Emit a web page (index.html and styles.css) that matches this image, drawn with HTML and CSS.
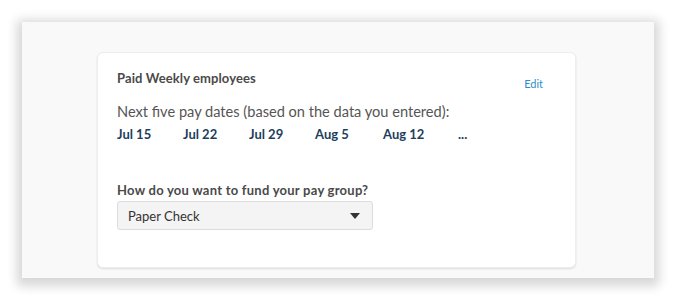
FILE: index.html
```html
<!DOCTYPE html>
<html>
<head>
<meta charset="utf-8">
<link rel="stylesheet" href="styles.css">
</head>
<body>
<div class="frame">
  <div class="card">
    <div class="head">
      <div class="title">Paid Weekly employees</div>
      <a class="edit">Edit</a>
    </div>
    <div class="next">Next five pay dates (based on the data you entered):</div>
    <div class="dates">
      <span>Jul 15</span>
      <span>Jul 22</span>
      <span>Jul 29</span>
      <span>Aug 5</span>
      <span>Aug 12</span>
      <span>...</span>
    </div>
    <div class="label">How do you want to fund your pay group?</div>
    <div class="select">
      <span>Paper Check</span>
      <svg class="caret" width="10" height="6" viewBox="0 0 10 6"><path d="M0 0H10L5 6Z" fill="#333"/></svg>
    </div>
  </div>
</div>
</body>
</html>
```
FILE: styles.css
```css
html, body {
  margin: 0;
  padding: 0;
  background: #ffffff;
}
body {
  font-family: Lato, "Open Sans", sans-serif;
  width: 676px;
  height: 300px;
  overflow: hidden;
}
.frame {
  margin: 22px 0 0 22px;
  width: 632px;
  height: 256px;
  background: #f9f9f9;
  box-shadow: 0 3px 10px 5px rgba(0, 0, 0, 0.16);
  padding: 30px 0 0 75px;
  box-sizing: border-box;
}
.card {
  width: 479px;
  height: 216px;
  box-sizing: border-box;
  background: #fff;
  border: 1px solid #eeeeee;
  border-radius: 6px;
  box-shadow: 0 1px 2px rgba(0, 0, 0, 0.12);
  padding: 17px 0 0 19px;
}
.head {
  display: flex;
  justify-content: space-between;
  align-items: flex-start;
  padding-right: 32px;
}
.title {
  font-size: 13px;
  letter-spacing: 0.1px;
  font-weight: 700;
  color: #4a4a4a;
  line-height: 16px;
}
.edit {
  font-size: 11px;
  color: #2e8fc8;
  margin-top: 7px;
  line-height: 14px;
}
.next {
  margin-top: 12px;
  font-size: 14.6px;
  color: #555;
  line-height: 18px;
}
.dates {
  display: flex;
  margin-top: 5px;
  font-size: 13px;
  font-weight: 700;
  color: #1e3e5c;
  line-height: 16px;
}
.dates span {
  width: 66px;
  flex: none;
}
.dates span:nth-child(4) {
  width: 68px;
}
.dates span:nth-child(5) {
  width: 75px;
}
.label {
  margin-top: 40px;
  font-size: 13px;
  letter-spacing: 0.25px;
  font-weight: 700;
  color: #4a4a4a;
  line-height: 16px;
}
.select {
  margin-top: 3px;
  width: 256px;
  height: 29px;
  box-sizing: border-box;
  background: #f4f4f4;
  border: 1px solid #dcdcdc;
  border-radius: 3px;
  display: flex;
  align-items: center;
  justify-content: space-between;
  padding: 0 12px 0 10px;
  font-size: 13px;
  color: #333;
}
.caret {
  display: block;
}
```
